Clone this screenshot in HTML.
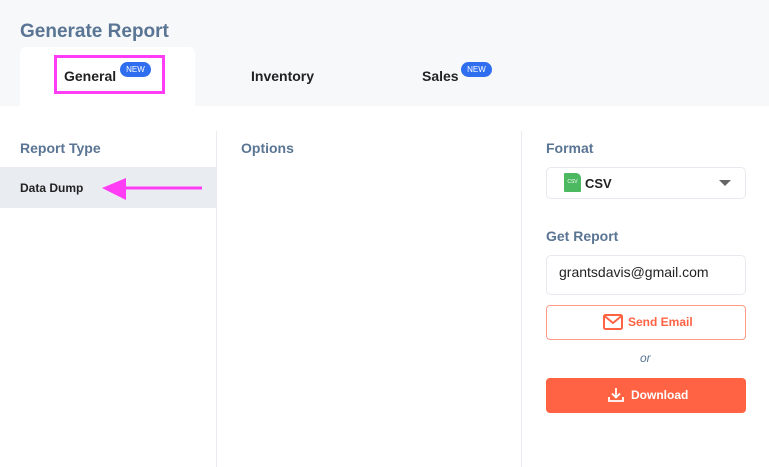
<!DOCTYPE html>
<html><head><style>
*{margin:0;padding:0;box-sizing:border-box}
body{width:769px;height:467px;background:#fff;font-family:"Liberation Sans",sans-serif;position:relative;overflow:hidden}
.a{position:absolute}
.h{color:#5a7594;font-weight:bold;font-size:14px}
.tab{font-weight:bold;font-size:14px;color:#222}
.new{background:#2f6fef;color:#fff;font-size:8px;border-radius:8px;width:31px;height:15px;line-height:15px;text-align:center;font-weight:normal}
</style></head><body>
<div class="a" style="left:0;top:0;width:769px;height:106px;background:#f7f8fa"></div>
<div class="a" style="left:20px;top:21px;font-size:19px;color:#5a7594;font-weight:bold">Generate Report</div>
<div class="a" style="left:20px;top:47px;width:175px;height:60px;background:#fff;border-radius:6px 6px 0 0"></div>
<div class="a" style="left:54px;top:55px;width:111px;height:39px;border:3px solid #ff3df5"></div>
<div class="a tab" style="left:64px;top:68px">General</div>
<div class="a new" style="left:120px;top:62px">NEW</div>
<div class="a tab" style="left:251px;top:68px">Inventory</div>
<div class="a tab" style="left:422px;top:68px">Sales</div>
<div class="a new" style="left:461px;top:62px">NEW</div>
<div class="a" style="left:216px;top:131px;width:1px;height:336px;background:#e8ebef"></div>
<div class="a" style="left:521px;top:131px;width:1px;height:336px;background:#e8ebef"></div>
<div class="a h" style="left:20px;top:140px">Report Type</div>
<div class="a h" style="left:241px;top:140px">Options</div>
<div class="a" style="left:0;top:167px;width:216px;height:41px;background:#e9ecf1"></div>
<div class="a" style="left:20px;top:181px;font-size:12px;font-weight:bold;color:#222">Data Dump</div>
<svg class="a" style="left:100px;top:176px" width="104" height="28"><line x1="20" y1="12" x2="102" y2="12" stroke="#ff3df5" stroke-width="3"/><polygon points="2,12 26,2 26,24" fill="#ff3df5"/></svg>
<div class="a h" style="left:546px;top:140px">Format</div>
<div class="a" style="left:546px;top:167px;width:200px;height:32px;border:1px solid #e6e9ee;border-radius:5px"></div>
<div class="a" style="left:564px;top:173px;width:17px;height:19px;background:#4cb860;border-radius:1px 5px 1px 1px;color:#fff;font-size:5px;line-height:19px;text-align:center">CSV</div>
<div class="a" style="left:585px;top:176px;font-size:13px;font-weight:bold;color:#222">CSV</div>
<div class="a" style="left:719px;top:180px;border-left:6px solid transparent;border-right:6px solid transparent;border-top:6px solid #666"></div>
<div class="a h" style="left:546px;top:228px">Get Report</div>
<div class="a" style="left:546px;top:255px;width:200px;height:40px;border:1px solid #e6e9ee;border-radius:5px"></div>
<div class="a" style="left:559px;top:264px;font-size:14px;color:#222">grantsdavis@gmail.com</div>
<div class="a" style="left:546px;top:305px;width:200px;height:35px;border:1px solid #ff9c88;border-radius:4px"></div>
<svg class="a" style="left:603px;top:314px" width="20" height="16"><rect x="1" y="1" width="18" height="14" rx="1.5" fill="none" stroke="#ff6343" stroke-width="2"/><path d="M1.5 2 L10 9 L18.5 2" fill="none" stroke="#ff6343" stroke-width="2"/></svg>
<div class="a" style="left:628px;top:315px;font-size:12px;font-weight:bold;color:#ff6343">Send Email</div>
<div class="a" style="left:640px;top:351px;font-size:12px;font-style:italic;color:#5a7594">or</div>
<div class="a" style="left:546px;top:378px;width:200px;height:35px;background:#ff6343;border-radius:4px"></div>
<svg class="a" style="left:607px;top:386px" width="18" height="18"><path d="M9 2 V11 M5 7.5 L9 11.5 L13 7.5 M2 11 V15 H16 V11" fill="none" stroke="#fff" stroke-width="1.8"/></svg>
<div class="a" style="left:631px;top:388px;font-size:12px;font-weight:bold;color:#fff">Download</div>
</body></html>
